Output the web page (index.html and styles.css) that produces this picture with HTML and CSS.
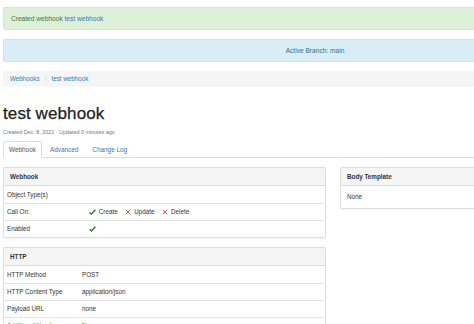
FILE: index.html
```html
<!DOCTYPE html>
<html lang="en">
<head>
    <meta charset="UTF-8">
    <title>test webhook</title>
    <link rel="stylesheet" href="styles.css">
</head>
<body>
    <div class="container">
        <div class="alert alert-success">Created webhook <a href="#">test webhook</a></div>
        <div class="alert alert-info">Active Branch: main</div>

        <ol class="breadcrumb">
            <li><a href="#">Webhooks</a></li>
            <li class="sep">/</li>
            <li><a href="#">test webhook</a></li>
        </ol>

        <h1>test webhook</h1>
        <p class="meta">Created Dec. 8, 2021 · Updated 0 minutes ago</p>

        <ul class="tabs">
            <li class="tab active"><a href="#">Webhook</a></li>
            <li class="tab"><a href="#">Advanced</a></li>
            <li class="tab"><a href="#">Change Log</a></li>
        </ul>

        <div class="row">
            <div class="col">
                <div class="panel">
                    <div class="panel-heading">Webhook</div>
                    <table class="attr-table wide-label">
                        <tr><td>Object Type(s)</td><td></td></tr>
                        <tr>
                            <td>Call On:</td>
                            <td>
                                <span class="flag">
                                    <svg class="icon-check" width="7" height="6" viewBox="0 0 7 6"><path d="M0.6 3.3 L2.5 5 L6.4 0.8" fill="none" stroke="#3d7a3d" stroke-width="1.5"/></svg>
                                    Create
                                </span>
                                <span class="flag">
                                    <svg class="icon-x" width="6" height="6" viewBox="0 0 6 6"><path d="M0.7 0.7 L5.3 5.3 M5.3 0.7 L0.7 5.3" fill="none" stroke="#c24a5c" stroke-width="0.9"/></svg>
                                    Update
                                </span>
                                <span class="flag">
                                    <svg class="icon-x" width="6" height="6" viewBox="0 0 6 6"><path d="M0.7 0.7 L5.3 5.3 M5.3 0.7 L0.7 5.3" fill="none" stroke="#c24a5c" stroke-width="0.9"/></svg>
                                    Delete
                                </span>
                            </td>
                        </tr>
                        <tr>
                            <td>Enabled</td>
                            <td><svg class="icon-check" width="7" height="6" viewBox="0 0 7 6"><path d="M0.6 3.3 L2.5 5 L6.4 0.8" fill="none" stroke="#3d7a3d" stroke-width="1.5"/></svg></td>
                        </tr>
                    </table>
                </div>

                <div class="panel">
                    <div class="panel-heading">HTTP</div>
                    <table class="attr-table">
                        <tr><td>HTTP Method</td><td>POST</td></tr>
                        <tr><td>HTTP Content Type</td><td>application/json</td></tr>
                        <tr><td>Payload URL</td><td>none</td></tr>
                        <tr><td>Additional Headers</td><td>None</td></tr>
                    </table>
                </div>
            </div>

            <div class="col">
                <div class="panel">
                    <div class="panel-heading">Body Template</div>
                    <div class="panel-body">None</div>
                </div>
            </div>
        </div>
    </div>
</body>
</html>
```

FILE: styles.css
```css
* {
    margin: 0;
    padding: 0;
    box-sizing: border-box;
}

html, body {
    overflow: hidden;
}

body {
    font-family: "Liberation Sans", Arial, sans-serif;
    color: #333;
    background-color: #fff;
}

a {
    color: #337ab7;
    text-decoration: none;
}

.container {
    width: 624px;
    margin-left: 3px;
    padding-top: 7px;
}

.alert {
    height: 23px;
    line-height: 21px;
    padding: 0 7px;
    margin-bottom: 9px;
    font-size: 6.6px;
    border: 1px solid transparent;
    border-radius: 2px;
}

.alert-success {
    background-color: #dff0d8;
    border-color: #d6e9c6;
    color: #3c763d;
}

.alert-info {
    background-color: #d9edf7;
    border-color: #bce8f1;
    color: #31708f;
    text-align: center;
}

.breadcrumb {
    display: flex;
    gap: 4px;
    list-style: none;
    height: 16px;
    line-height: 16px;
    padding: 0 7px;
    font-size: 6.3px;
    background-color: #f5f5f5;
    border-radius: 2px;
}

.breadcrumb .sep {
    color: #ccc;
    padding: 0 1px;
}

h1 {
    margin-top: 17px;
    font-size: 17px;
    line-height: 20px;
    font-weight: normal;
    color: #222;
    letter-spacing: 0.1px;
    -webkit-text-stroke: 0.25px #222;
}

.meta {
    margin-top: 4px;
    font-size: 5.4px;
    line-height: 8px;
    color: #777;
}

.tabs {
    display: flex;
    list-style: none;
    margin-top: 5px;
    height: 17px;
    border-bottom: 1px solid #ddd;
    font-size: 6.4px;
}

.tab {
    margin-right: 2px;
}

.tab a {
    display: block;
    height: 17px;
    line-height: 16px;
    padding: 0 5px;
    border: 1px solid transparent;
    border-radius: 2px 2px 0 0;
}

.tab.active a {
    color: #555;
    background-color: #fff;
    border-color: #ddd #ddd #fff;
}

.row {
    display: flex;
    gap: 14px;
    margin-top: 9px;
}

.col {
    width: 323px;
    flex-shrink: 0;
    display: flex;
    flex-direction: column;
    gap: 9px;
}

.panel {
    border: 1px solid #ddd;
    border-radius: 2px;
    background-color: #fff;
    box-shadow: 0 1px 1px rgba(0, 0, 0, 0.05);
    font-size: 6.3px;
}

.panel-heading {
    height: 18px;
    line-height: 17px;
    padding: 0 6px;
    font-weight: bold;
    color: #333;
    background-color: #f5f5f5;
    border-bottom: 1px solid #ddd;
}

.panel-body {
    height: 22px;
    line-height: 22px;
    padding: 0 6px;
}

.attr-table {
    width: 100%;
    border-collapse: collapse;
}

.attr-table td {
    height: 17px;
    padding: 0 3px;
    vertical-align: middle;
    border-top: 1px solid #e3e3e3;
}

.attr-table tr:first-child td {
    border-top: none;
}

.attr-table td:first-child {
    width: 75px;
}

.wide-label td:first-child {
    width: 82px;
}

.flag {
    margin-right: 6px;
}

.flag svg,
.attr-table svg {
    vertical-align: -0.5px;
    margin-right: 1px;
}
```
